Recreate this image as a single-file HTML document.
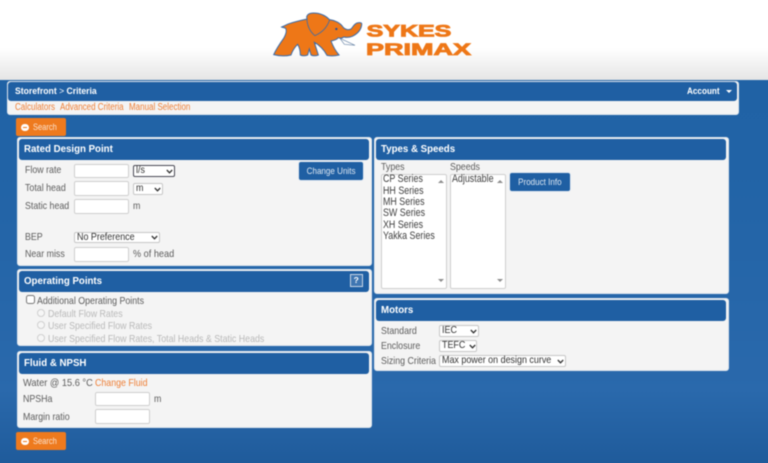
<!DOCTYPE html>
<html lang="en"><head><meta charset="utf-8"><title>Storefront Criteria</title>
<style>
html,body{margin:0;padding:0;width:768px;height:463px;overflow:hidden}
body{position:relative;font-family:"Liberation Sans",sans-serif;font-size:10px;color:#555;background:linear-gradient(#2062a5 0,#2163a6 150px,#2a69ac 390px,#1f5b9b 463px)}
#w{position:absolute;left:0;top:0;width:768px;height:463px;filter:blur(.4px)}
#w *{box-sizing:border-box}
.bg{position:absolute;left:-6px;top:-6px;width:780px;height:475px;background:linear-gradient(#2062a5 0,#2163a6 156px,#2a69ac 396px,#1f5b9b 469px)}
.top{position:absolute;left:-6px;top:-6px;width:780px;height:86px;background:linear-gradient(#fff 0,#fff 54px,#e6e6e6 85px)}
.p{position:absolute;background:#f4f4f4;border-radius:3px;border:1px solid #dfe6ee}
.h{position:absolute;background:#1f5fa3;border-radius:3px;color:#fff;font-weight:bold;font-size:9.7px;line-height:22px;padding-left:5px}
.t{position:absolute;margin-top:1px;line-height:12px;white-space:nowrap;font-size:10.4px;color:#5c5c5c;transform:scaleX(.85);transform-origin:0 50%}
.s{color:#3f3f3f;font-size:10.6px;transform:scaleX(.84);margin-top:0}
.o{color:#ee7f36}
.lk{font-size:10px;transform:scaleX(.8)}
.d{color:#b9b9b9}
input.i{position:absolute;margin:0;padding:0;background:#fff;border:1px solid #cfcfcf;border-radius:2px;width:55px;height:14.5px}
.sel{position:absolute;background:#fff;border:1px solid #c6c6c6;border-radius:2px;font-size:10.4px;color:#333;height:11.5px;line-height:10px;white-space:nowrap}
.sel span{position:absolute;left:2px;top:0;transform:scaleX(.86);transform-origin:0 50%}
.ch{position:absolute;width:7px;height:5px}
.b{position:absolute;background:#1f5fa3;color:#dfe8f2;border:1px solid #e3eaf2;border-radius:3px;text-align:center;font-size:9.6px;line-height:19px;white-space:nowrap}
.b span{display:inline-block;transform:scaleX(.84)}
.sb{position:absolute;left:15.5px;width:50px;height:18px;background:#ee7a1e;border-radius:2px;color:#fbe3d0;font-size:9.4px;line-height:18px}
.sb b{position:absolute;left:17.5px;top:0;font-weight:normal;transform:scaleX(.8);transform-origin:0 50%}
.sb i{position:absolute;left:5.5px;top:5.5px;width:7.5px;height:7.5px;border-radius:50%;background:#fff}
.sb i:after{content:"";position:absolute;left:2px;top:3.2px;width:3.5px;height:1px;background:#ee7a1e}
.l{position:absolute;top:173.5px;height:115px;background:#fff;border:1px solid #cfcfcf;border-radius:2px}
.r{position:absolute;left:37px;width:8px;height:8px;border:1px solid #cfcfcf;border-radius:50%;background:#f6f6f6}
.tri{position:absolute;width:0;height:0;border-left:3px solid transparent;border-right:3px solid transparent}
</style></head><body><div id="w">
<div class="bg"></div>
<div class="top"></div>
<svg style="position:absolute;left:250px;top:0" width="240" height="80" viewBox="0 0 720 240">
<g transform="translate(45 15)">
<path d="M225 100 L270 121 L238 118 Z" fill="#fff" stroke="#6a86a8" stroke-width="2"/>
<path d="M50 66 C60 62 66 58 72 56 C90 50 108 46 126 42 C122 30 132 24 146 24 C162 24 180 30 194 44 C210 46 226 54 234 66 C240 74 250 76 258 72 C264 66 266 58 276 54 C284 52 292 52 290 60 C288 74 278 86 262 94 C252 98 244 98 236 96 C232 100 226 100 220 98 C214 106 204 106 198 108 C204 124 212 138 222 150 C210 153 196 153 186 151 C178 136 166 122 148 112 L160 150 C152 153 144 153 138 150 L133 132 L128 150 C120 153 112 153 106 150 C106 140 104 128 98 118 C90 126 82 138 78 150 C62 154 42 153 26 149 C34 132 46 114 56 100 C62 90 66 78 62 70 C58 68 54 68 50 66 Z" fill="#ee7717" stroke="#3a6cab" stroke-width="3"/>
<path d="M126 42 C126 60 134 80 150 92 C168 84 186 70 194 44" fill="none" stroke="#3a6cab" stroke-width="2.5"/>
<circle cx="214" cy="72" r="3.5" fill="#25509a"/>
</g>
<text x="350" y="109" font-family="Liberation Sans,sans-serif" font-weight="bold" font-size="49" textLength="254" lengthAdjust="spacingAndGlyphs" fill="#ee7717" stroke="#ee7717" stroke-width="2.5">SYKES</text>
<text x="348" y="165" font-family="Liberation Sans,sans-serif" font-weight="bold" font-size="51" textLength="315" lengthAdjust="spacingAndGlyphs" fill="#ee7717" stroke="#ee7717" stroke-width="2.5">PRIMAX</text>
</svg>

<div class="p" style="left:7px;top:81px;width:732px;height:34px"></div>
<div class="h" style="left:8px;top:82px;width:729px;height:19px"></div>
<div class="t" style="left:15px;top:84px;color:#fff;font-weight:bold;font-size:9.4px;transform:scaleX(.92)">Storefront <span style="font-weight:normal">&gt;</span> Criteria</div>
<div class="t" style="left:687px;top:84px;color:#fff;font-weight:bold;font-size:9.4px;transform:scaleX(.87)">Account</div>
<div class="tri" style="left:725.5px;top:90px;border-top:3px solid #fff"></div>
<div class="t o lk" style="left:15px;top:101px">Calculators</div>
<div class="t o lk" style="left:60px;top:101px">Advanced Criteria</div>
<div class="t o lk" style="left:129px;top:101px">Manual Selection</div>

<div class="sb" style="top:118px"><i></i><b>Search</b></div>

<div class="p" style="left:17px;top:137px;width:354.5px;height:128.5px"></div>
<div class="h" style="left:19px;top:139px;width:350px;height:21px">Rated Design Point</div>
<div class="t" style="left:25px;top:164px">Flow rate</div>
<input class="i" style="left:73.5px;top:163.5px">
<div class="sel" style="left:133px;top:165px;width:41.5px;border:1.2px solid #4a4a55"><span>l/s</span></div>
<svg class="ch" style="left:165.5px;top:168.5px" viewBox="0 0 7 5"><path d="M.8 1 3.5 3.8 6.2 1" fill="none" stroke="#333" stroke-width="1.3"/></svg>
<div class="t" style="left:25px;top:182px">Total head</div>
<input class="i" style="left:73.5px;top:181px">
<div class="sel" style="left:133px;top:183px;width:29.5px"><span>m</span></div>
<svg class="ch" style="left:153.5px;top:186.5px" viewBox="0 0 7 5"><path d="M.8 1 3.5 3.8 6.2 1" fill="none" stroke="#333" stroke-width="1.3"/></svg>
<div class="t" style="left:25px;top:200px">Static head</div>
<input class="i" style="left:73.5px;top:199px">
<div class="t" style="left:133px;top:200px">m</div>
<div class="t" style="left:25px;top:231px">BEP</div>
<div class="sel" style="left:73.5px;top:231.5px;width:86.5px"><span>No Preference</span></div>
<svg class="ch" style="left:150.5px;top:235px" viewBox="0 0 7 5"><path d="M.8 1 3.5 3.8 6.2 1" fill="none" stroke="#333" stroke-width="1.3"/></svg>
<div class="t" style="left:25px;top:248px">Near miss</div>
<input class="i" style="left:73.5px;top:247px">
<div class="t" style="left:133px;top:248px;transform:scaleX(.88)">% of head</div>
<div class="b" style="left:298px;top:161px;width:66px;height:19.5px"><span>Change Units</span></div>

<div class="p" style="left:17px;top:269px;width:354.5px;height:76.5px"></div>
<div class="h" style="left:19px;top:271px;width:350px;height:21px">Operating Points</div>
<div style="position:absolute;left:350px;top:274px;width:12.5px;height:12.5px;border:1px solid #c9d6e6;background:#3f76b2;color:#fff;font-weight:bold;font-size:8.5px;line-height:10.5px;text-align:center">?</div>
<input type="checkbox" style="position:absolute;left:26px;top:295px;width:9px;height:9px;margin:0">
<div class="t" style="left:37px;top:295px">Additional Operating Points</div>
<div class="r" style="top:309px"></div><div class="t d" style="left:47.5px;top:307.5px">Default Flow Rates</div>
<div class="r" style="top:321px"></div><div class="t d" style="left:47.5px;top:320px">User Specified Flow Rates</div>
<div class="r" style="top:334px"></div><div class="t d" style="left:47.5px;top:332.5px">User Specified Flow Rates, Total Heads &amp; Static Heads</div>

<div class="p" style="left:17px;top:351px;width:354.5px;height:76.5px"></div>
<div class="h" style="left:19px;top:352.5px;width:350px;height:21px">Fluid &amp; NPSH</div>
<div class="t" style="left:23px;top:377px;transform:scaleX(.89)">Water @ 15.6 °C</div>
<div class="t o" style="left:95px;top:377px">Change Fluid</div>
<div class="t" style="left:23px;top:393px">NPSHa</div>
<input class="i" style="left:95px;top:391.5px">
<div class="t" style="left:154px;top:393px">m</div>
<div class="t" style="left:23px;top:411px">Margin ratio</div>
<input class="i" style="left:95px;top:409px">

<div class="sb" style="top:432px"><i></i><b>Search</b></div>

<div class="p" style="left:374px;top:137px;width:354.5px;height:156.5px"></div>
<div class="h" style="left:376px;top:139px;width:350px;height:21px">Types &amp; Speeds</div>
<div class="t" style="left:381px;top:161px">Types</div>
<div class="t" style="left:450px;top:161px">Speeds</div>
<div class="l" style="left:381px;width:66px"></div>
<div class="l" style="left:450px;width:56px"></div>
<div class="t s" style="left:383px;top:173px">CP Series</div>
<div class="t s" style="left:383px;top:184.5px">HH Series</div>
<div class="t s" style="left:383px;top:196px">MH Series</div>
<div class="t s" style="left:383px;top:207px">SW Series</div>
<div class="t s" style="left:383px;top:218.5px">XH Series</div>
<div class="t s" style="left:383px;top:230px">Yakka Series</div>
<div class="t s" style="left:452px;top:173px">Adjustable</div>
<div class="tri" style="left:438px;top:179.5px;border-bottom:3.5px solid #8d8d8d"></div>
<div class="tri" style="left:438px;top:278.5px;border-top:3.5px solid #8d8d8d"></div>
<div class="tri" style="left:497px;top:179.5px;border-bottom:3.5px solid #8d8d8d"></div>
<div class="tri" style="left:497px;top:278.5px;border-top:3.5px solid #8d8d8d"></div>
<div class="b" style="left:509px;top:172px;width:62px;height:19.5px"><span>Product Info</span></div>

<div class="p" style="left:374px;top:298px;width:354.5px;height:73px"></div>
<div class="h" style="left:376px;top:300px;width:350px;height:21px">Motors</div>
<div class="t" style="left:380.5px;top:325px">Standard</div>
<div class="sel" style="left:439px;top:325px;width:40px"><span>IEC</span></div>
<svg class="ch" style="left:470px;top:328.5px" viewBox="0 0 7 5"><path d="M.8 1 3.5 3.8 6.2 1" fill="none" stroke="#333" stroke-width="1.3"/></svg>
<div class="t" style="left:380.5px;top:340px">Enclosure</div>
<div class="sel" style="left:439px;top:340px;width:38px"><span>TEFC</span></div>
<svg class="ch" style="left:468.5px;top:343.5px" viewBox="0 0 7 5"><path d="M.8 1 3.5 3.8 6.2 1" fill="none" stroke="#333" stroke-width="1.3"/></svg>
<div class="t" style="left:380.5px;top:355px">Sizing Criteria</div>
<div class="sel" style="left:439px;top:355px;width:127px"><span>Max power on design curve</span></div>
<svg class="ch" style="left:557px;top:358.5px" viewBox="0 0 7 5"><path d="M.8 1 3.5 3.8 6.2 1" fill="none" stroke="#333" stroke-width="1.3"/></svg>
</div></body></html>
